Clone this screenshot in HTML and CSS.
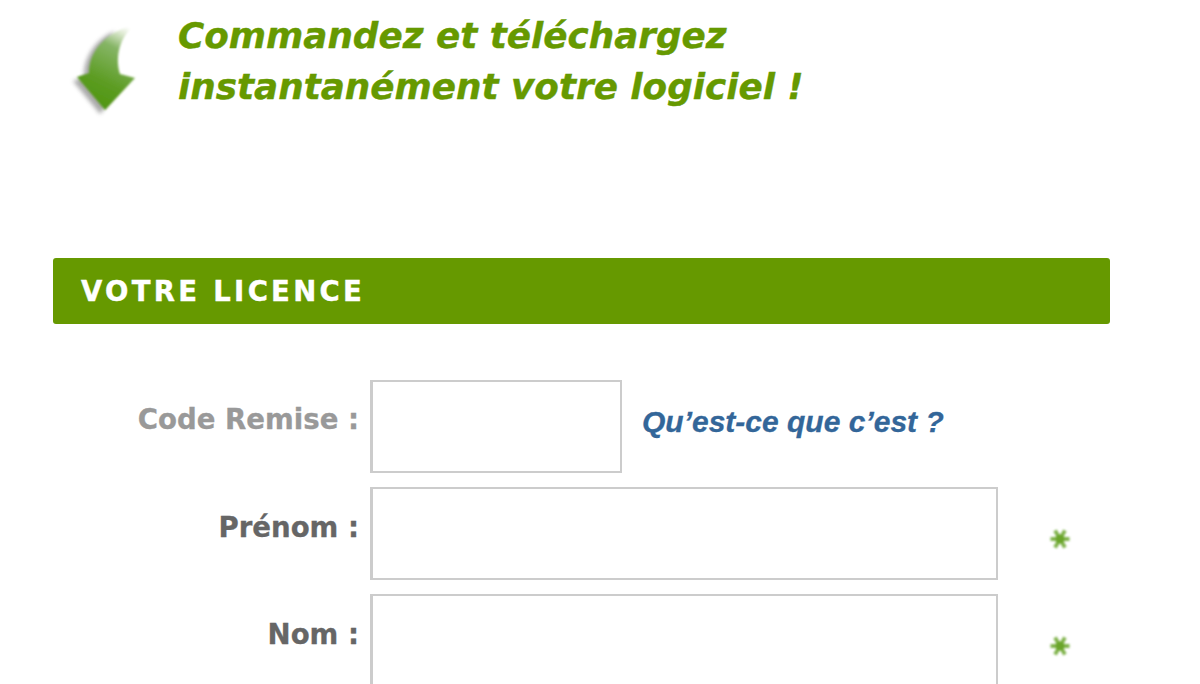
FILE: index.html
```html
<!DOCTYPE html>
<html lang="fr">
<head>
<meta charset="utf-8">
<title>Commandez et téléchargez</title>
<link rel="stylesheet" href="styles.css">
</head>
<body>
<header class="intro">
  <svg class="arrow" width="82" height="106" viewBox="0 0 82 106" aria-hidden="true">
    <defs>
      <linearGradient id="ag" x1="0.75" y1="0" x2="0.4" y2="1">
        <stop offset="0" stop-color="#fff"/>
        <stop offset="0.1" stop-color="#dde9d0"/>
        <stop offset="0.28" stop-color="#86b566"/>
        <stop offset="0.7" stop-color="#5c9c22"/>
        <stop offset="1" stop-color="#4f9610"/>
      </linearGradient>
      <filter id="ab" x="-20%" y="-20%" width="140%" height="140%"><feGaussianBlur stdDeviation="1.1"/></filter>
      <filter id="as" x="-20%" y="-20%" width="140%" height="140%"><feGaussianBlur stdDeviation="2.2"/></filter>
    </defs>
    <path d="M12 60 L23 56 C22 38 34 18 54 10 C44 24 48 42 52 59 L66 60 L39 93 Z" fill="#666" opacity=".55" filter="url(#as)" transform="translate(-5 3)"/>
    <path d="M11 59 L23 55 C23 34 38 14 71 6 C56 15 48 36 54 56 L69 60 L39 92 Z" fill="url(#ag)" filter="url(#ab)"/>
  </svg>
  <h1 class="headline">Commandez et téléchargez<br>instantanément votre logiciel !</h1>
</header>

<section class="licence">
  <h2 class="banner">VOTRE LICENCE</h2>
  <form class="fields">
    <div class="row">
      <label class="label label-muted" for="code">Code Remise :</label>
      <input class="input input-short" id="code" type="text">
      <a class="help" href="#">Qu’est-ce que c’est ?</a>
    </div>
    <div class="row">
      <label class="label" for="prenom">Prénom :</label>
      <input class="input input-long" id="prenom" type="text">
      <svg class="req" width="24" height="24" viewBox="0 0 24 24" aria-hidden="true"><path d="M2.5 12H21.5M7 3.5L17 20.5M17 3.5L7 20.5"/><circle cx="12" cy="12" r="4.5"/></svg>
    </div>
    <div class="row">
      <label class="label" for="nom">Nom :</label>
      <input class="input input-long" id="nom" type="text">
      <svg class="req" width="24" height="24" viewBox="0 0 24 24" aria-hidden="true"><path d="M2.5 12H21.5M7 3.5L17 20.5M17 3.5L7 20.5"/><circle cx="12" cy="12" r="4.5"/></svg>
    </div>
  </form>
</section>
</body>
</html>
```
FILE: styles.css
```css
html, body {
  margin: 0;
  height: 684px;
  overflow: hidden;
  background: #fff;
}
body {
  font-family: "DejaVu Sans", Verdana, sans-serif;
}
.intro {
  display: flex;
  align-items: flex-start;
  height: 258px;
  padding-left: 66px;
  box-sizing: border-box;
}
.arrow {
  margin-top: 18px;
  flex: none;
}
.headline {
  margin: 10px 0 0 30px;
  font-size: 35.75px;
  line-height: 51px;
  font-weight: bold;
  font-style: italic;
  color: #669900;
  -webkit-text-stroke: .4px #669900;
}
.licence {
  margin-left: 53px;
  width: 1057px;
}
.banner {
  margin: 0;
  height: 66px;
  padding-left: 28px;
  line-height: 66px;
  font-size: 27.5px;
  font-weight: bold;
  letter-spacing: 3.3px;
  color: #fff;
  background: #669900;
  border-radius: 3px;
  -webkit-text-stroke: .4px #fff;
}
.fields {
  display: flex;
  flex-direction: column;
  gap: 14px;
  padding-top: 56px;
}
.row {
  display: flex;
  align-items: flex-start;
  height: 93px;
}
.label {
  width: 306px;
  padding-top: 24px;
  text-align: right;
  font-size: 27.6px;
  line-height: 34px;
  font-weight: bold;
  color: #666;
  -webkit-text-stroke: .3px currentColor;
}
.label-muted {
  padding-top: 23px;
  color: #999;
}
.input {
  display: block;
  height: 93px;
  margin: 0 0 0 11px;
  padding: 0;
  box-sizing: border-box;
  border: 2px solid #ccc;
  border-left-width: 3px;
  background: #fff;
  flex: none;
}
.input-short {
  width: 252px;
}
.input-long {
  width: 628px;
}
.help {
  margin: 24px 0 0 20px;
  font-family: "Liberation Sans", Arial, sans-serif;
  font-size: 30px;
  line-height: 36px;
  font-weight: bold;
  font-style: italic;
  color: #336699;
  text-decoration: none;
  -webkit-text-stroke: .3px #336699;
}
.req {
  margin: 40px 0 0 50px;
  flex: none;
  filter: blur(.8px);
}
.req path {
  fill: none;
  stroke: #7fb24a;
  stroke-width: 3.8;
}
.req circle {
  fill: #6aa52a;
}
```
